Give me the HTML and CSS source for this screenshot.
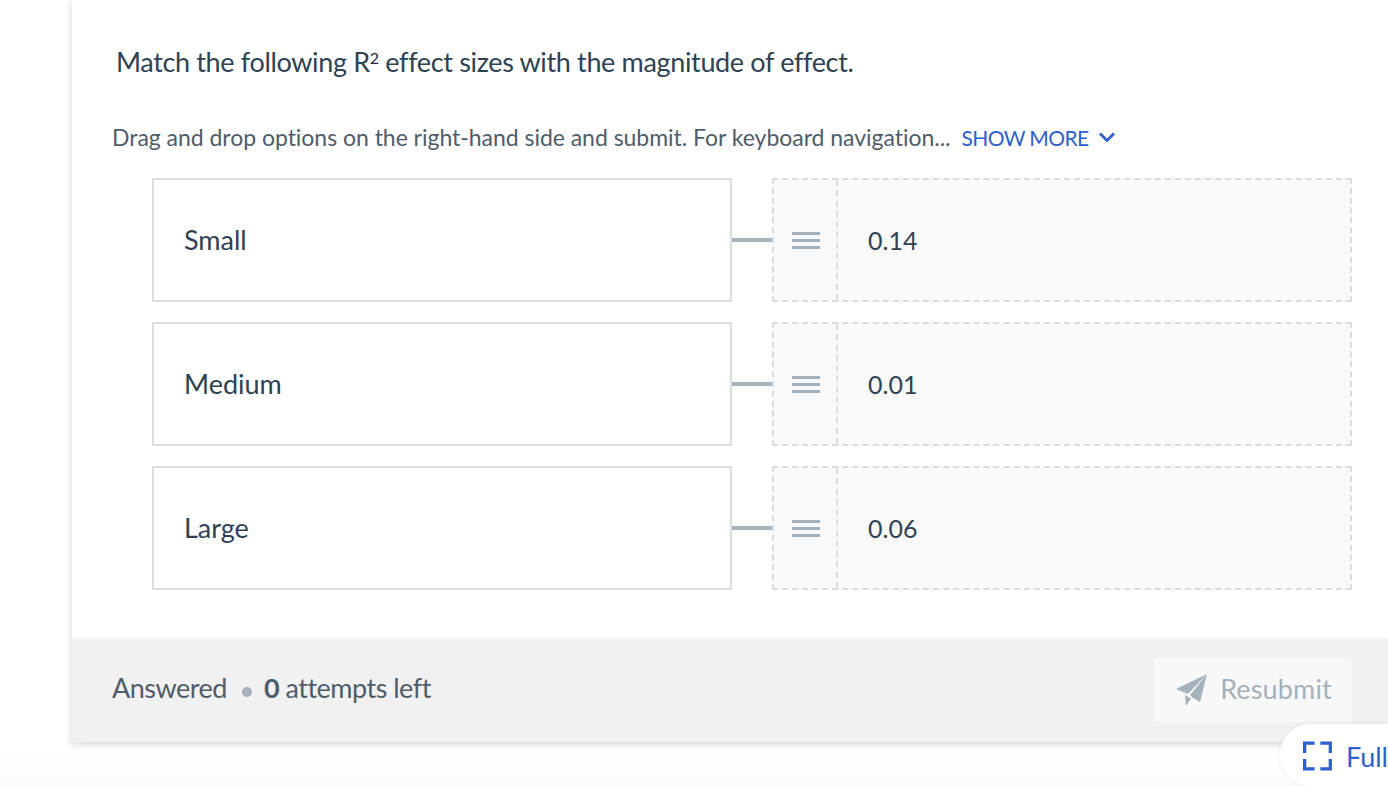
FILE: index.html
```html
<!DOCTYPE html>
<html lang="en">
<head>
    <meta charset="UTF-8">
    <meta name="viewport" content="width=device-width, initial-scale=1.0">
    <title>Matching Question</title>
    <link rel="stylesheet" href="styles.css">
</head>
<body>
    <div class="question-card">
        <div class="question-body">
            <h1 class="prompt">Match the following R<sup>2</sup> effect sizes with the magnitude of effect.</h1>
            <p class="hint">
                <span class="hint-text">Drag and drop options on the right-hand side and submit. For keyboard navigation...</span>
                <a class="show-more"><span class="show-more-text">SHOW MORE</span>
                    <svg width="16" height="10" viewBox="0 0 16 10"><path d="M1 1.500 8 8.500l7-7" fill="none" stroke="#2f5fd0" stroke-width="2.800"/></svg>
                </a>
            </p>
            <div class="match-list">
                <div class="match-row">
                    <div class="match-label">Small</div>
                    <div class="connector"></div>
                    <div class="match-option">
                        <div class="handle"><span></span><span></span><span></span></div>
                        <div class="option-value">0.14</div>
                    </div>
                </div>
                <div class="match-row">
                    <div class="match-label">Medium</div>
                    <div class="connector"></div>
                    <div class="match-option">
                        <div class="handle"><span></span><span></span><span></span></div>
                        <div class="option-value">0.01</div>
                    </div>
                </div>
                <div class="match-row">
                    <div class="match-label">Large</div>
                    <div class="connector"></div>
                    <div class="match-option">
                        <div class="handle"><span></span><span></span><span></span></div>
                        <div class="option-value">0.06</div>
                    </div>
                </div>
            </div>
        </div>
        <div class="question-footer">
            <div class="attempts">
                <span>Answered</span>
                <span class="dot"></span>
                <span><b>0</b> attempts left</span>
            </div>
            <button class="resubmit">
                <svg width="32" height="33" viewBox="0 0 32 33" fill="#a5b1bb">
                    <path d="M0 15 31 0 12 20Z"/>
                    <path d="M31 0 24 28 16.500 23.500 14 21Z"/>
                    <path d="M9 21 10 32 15 24.500Z"/>
                </svg>
                <span class="resubmit-text">Resubmit</span>
            </button>
        </div>
    </div>
    <div class="fullscreen">
        <svg width="30" height="30" viewBox="0 0 30 30"><path d="M12 1.700H1.700V12M18 1.700h10.300V12M12 28.300H1.700V18M18 28.300h10.300V18" fill="none" stroke="#2f5fd0" stroke-width="3.400"/></svg>
        <span class="fullscreen-text">Full</span>
    </div>
</body>
</html>
```

FILE: styles.css
```css
html, body {
    height: 786px;
    overflow: hidden;
}
body {
    margin: 0;
    position: relative;
    background: linear-gradient(#ffffff 750px, #fbfbfb 786px);
    font-family: Lato, "Open Sans", sans-serif;
    color: #2f4254;
}
.question-card {
    margin-left: 72px;
    background: white;
    box-shadow: 0 2px 8px rgba(0,0,0,0.18);
}
.question-body {
    padding: 42px 36px 48px 40px;
}
.prompt {
    margin: 0 0 0 4px;
    font-size: 27px;
    line-height: 40px;
    font-weight: 400;
    letter-spacing: -0.35px;
}
.prompt sup {
    font-size: 16px;
    line-height: 0;
    vertical-align: 8px;
    color: #1f2d3a;
}
.hint {
    margin: 40px 0 0;
    height: 30px;
    display: flex;
    align-items: center;
    gap: 11px;
    font-size: 23px;
    color: #4e5d6b;
}
.hint-text {
    letter-spacing: -0.03px;
}
.show-more {
    display: flex;
    align-items: center;
    gap: 10px;
    color: #2f5fd0;
}
.show-more-text {
    font-size: 21px;
    letter-spacing: -0.6px;
}
.match-list {
    margin: 26px 0 0 40px;
    display: flex;
    flex-direction: column;
    gap: 20px;
}
.match-row {
    display: flex;
    align-items: center;
    height: 124px;
}
.match-label {
    box-sizing: border-box;
    width: 580px;
    height: 100%;
    border: 2px solid #d9dde1;
    padding: 0 0 2px 30px;
    display: flex;
    align-items: center;
    font-size: 27px;
}
.connector {
    width: 40px;
    height: 4px;
    background: #a5b1bb;
}
.match-option {
    box-sizing: border-box;
    width: 580px;
    height: 100%;
    display: flex;
    border: 2px dashed #dcdcdc;
    background: #f9f9f9;
}
.handle {
    width: 60px;
    padding-left: 2px;
    flex: none;
    border-right: 2px dashed #dcdcdc;
    display: flex;
    flex-direction: column;
    align-items: center;
    justify-content: center;
    gap: 4px;
}
.handle span {
    width: 28px;
    height: 3px;
    background: #a5b1bb;
}
.option-value {
    padding-left: 30px;
    display: flex;
    align-items: center;
    font-size: 25px;
}
.question-footer {
    height: 104px;
    background: #f1f1f1;
    padding: 0 36px 0 40px;
    display: flex;
    align-items: center;
    justify-content: space-between;
}
.attempts {
    display: flex;
    align-items: center;
    gap: 12px;
    padding-bottom: 5px;
    font-size: 27px;
    color: #4e5d6b;
    letter-spacing: -0.5px;
}
.dot {
    width: 10px;
    height: 10px;
    margin: 8px 0 0 3px;
    border-radius: 50%;
    background: #a5b1bb;
}
.resubmit {
    width: 198px;
    height: 64px;
    padding: 0 0 0 2px;
    border: none;
    border-radius: 4px;
    background: #f8f8f8;
    color: #a5b1bb;
    font-family: inherit;
    font-size: 27px;
    display: flex;
    align-items: center;
    justify-content: center;
    gap: 12px;
}
.resubmit-text {
    letter-spacing: 0.15px;
    margin-bottom: 4px;
}
.fullscreen {
    position: absolute;
    left: 1280px;
    top: 724px;
    width: 108px;
    height: 62px;
    box-sizing: border-box;
    padding: 17px 0 0 23px;
    background: white;
    border-radius: 33px 0 0 33px;
    box-shadow: 0 0 6px rgba(0,0,0,0.06);
    display: flex;
    align-items: flex-start;
    gap: 14px;
    color: #2f5fd0;
    font-size: 27px;
    line-height: 32px;
}
```
